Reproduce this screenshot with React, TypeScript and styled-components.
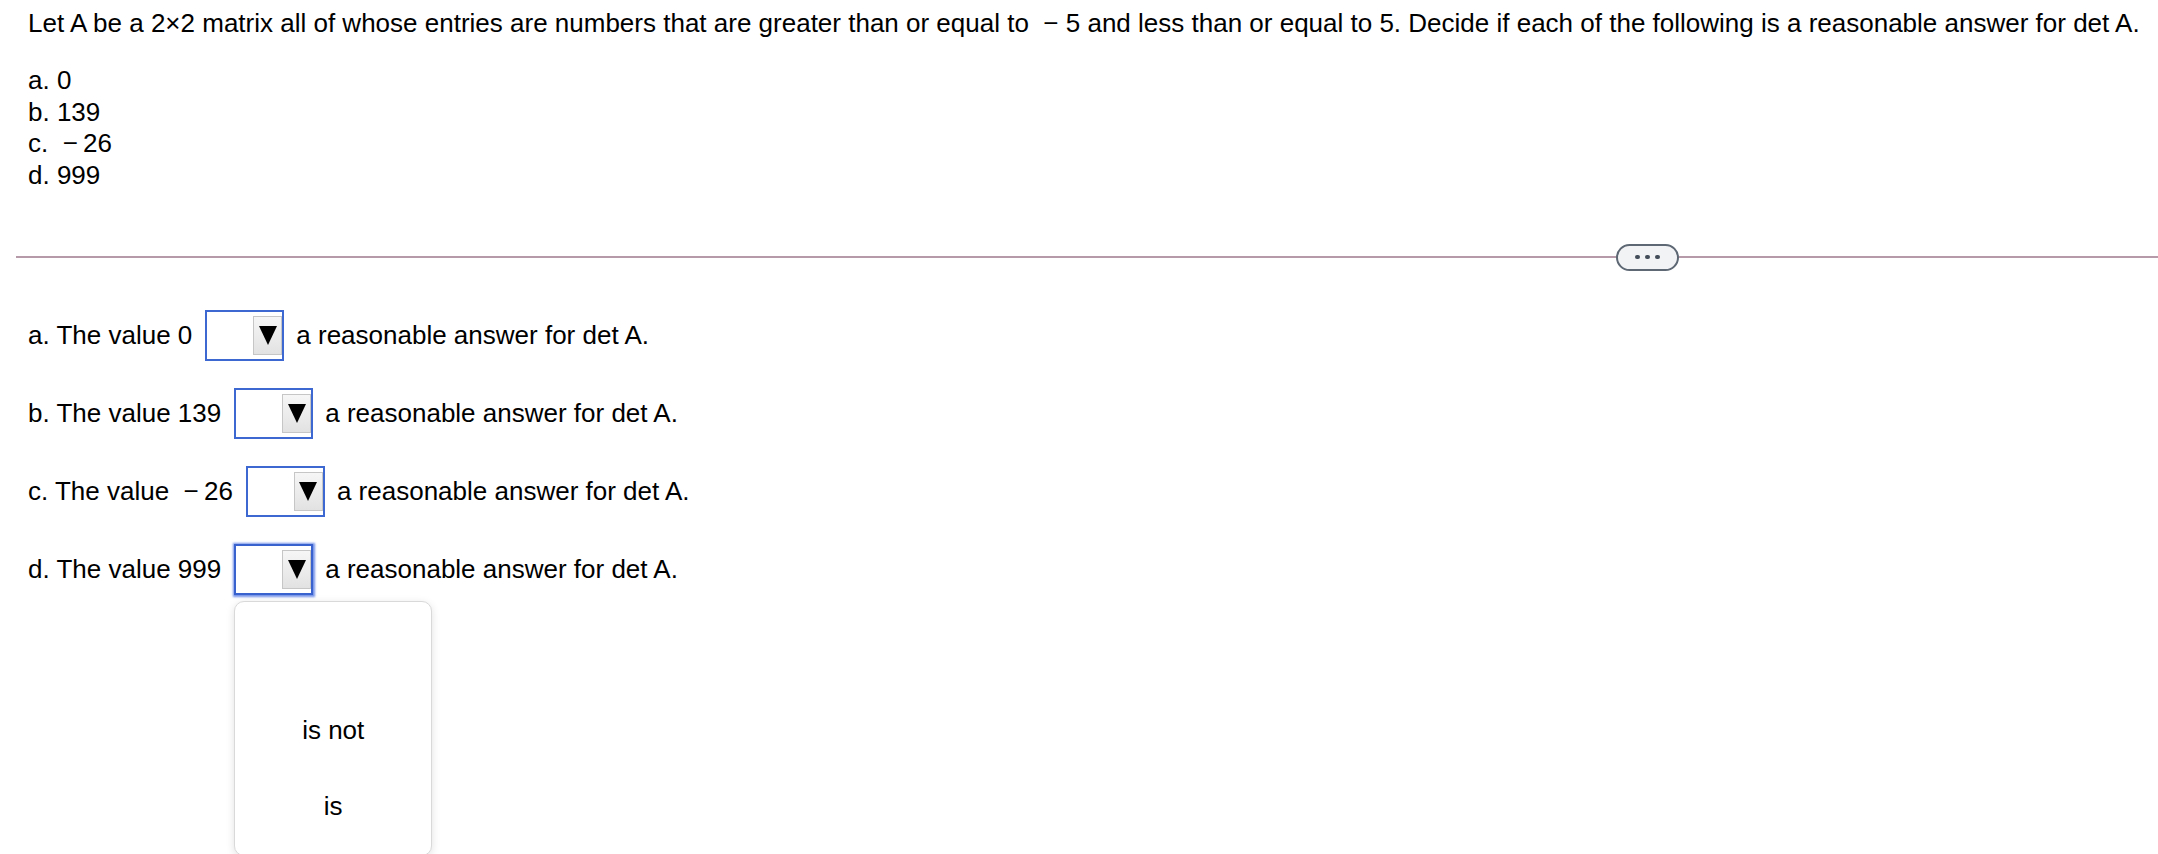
import React from "react";
import styled, { createGlobalStyle } from "styled-components";

const Global = createGlobalStyle`
  html, body { margin: 0; padding: 0; background: #ffffff; overflow: hidden; }
  body { font-family: "Liberation Sans", Arial, Helvetica, sans-serif; color: #000; }
`;

const Page = styled.div`
  display: flex;
  flex-direction: column;
  padding: 7px 0 0 16px;
  font-size: 26px;
  height: 847px;
`;

const Question = styled.div`
  padding-left: 12px;
`;

const Prompt = styled.p`
  margin: 0;
  line-height: 32px;
  white-space: nowrap;
`;

const Choices = styled.div`
  margin-top: 26px;
  display: flex;
  flex-direction: column;
`;

const Choice = styled.div`
  line-height: 31.67px;
  white-space: nowrap;
`;

const DividerRow = styled.div`
  margin-top: 52px;
  display: flex;
  align-items: center;
  height: 27px;
`;

const Rule = styled.div<{ $w?: number }>`
  height: 1.6px;
  background: #b79aaa;
  ${(p) => (p.$w ? `width: ${p.$w}px; flex: none;` : "flex: 1;")}
`;

const Pill = styled.button`
  flex: none;
  width: 63px;
  height: 27px;
  box-sizing: border-box;
  border: 2px solid #5d6874;
  border-radius: 14px;
  background: #f2f3f5;
  display: flex;
  align-items: center;
  justify-content: center;
  gap: 5.5px;
  padding: 0;
`;

const Dot = styled.span`
  width: 4.5px;
  height: 4.5px;
  border-radius: 50%;
  background: #434d59;
`;

const Answers = styled.div`
  margin-top: 39px;
  display: flex;
  flex-direction: column;
  gap: 27px;
  padding-left: 12px;
`;

const Row = styled.div`
  display: flex;
  align-items: center;
  height: 51px;
  white-space: nowrap;
`;

const Label = styled.span`
  line-height: 32px;
`;

const SelectWrap = styled.div`
  position: relative;
  margin: 0 12px 0 13px;
`;

const SelectBox = styled.div<{ $focused?: boolean }>`
  width: 79px;
  height: 51px;
  box-sizing: border-box;
  border: 2px solid ${(p) => (p.$focused ? "#3a62cf" : "#3d68d2")};
  ${(p) =>
    p.$focused
      ? "box-shadow: 0 0 2px 1.5px rgba(70, 110, 225, 0.75);"
      : ""}
  background: #fff;
  display: flex;
  align-items: center;
  justify-content: flex-end;
`;

const ArrowButton = styled.div`
  width: 29px;
  height: 39px;
  box-sizing: border-box;
  border: 1.5px solid #c6c6c6;
  background: linear-gradient(#f6f6f6, #e2e2e2);
  display: flex;
  align-items: center;
  justify-content: center;
`;

const Menu = styled.div`
  position: absolute;
  top: calc(100% + 6px);
  left: 0;
  width: 198px;
  box-sizing: border-box;
  border: 1.5px solid #d9d9d9;
  border-radius: 10px;
  background: #fff;
  box-shadow: 0 2px 8px rgba(0, 0, 0, 0.12);
  padding: 14px 0 11px;
  display: flex;
  flex-direction: column;
  z-index: 5;
`;

const Option = styled.div`
  height: 76px;
  line-height: 76px;
  text-align: center;
`;

const Arrow = () => (
  <svg width="18" height="19" viewBox="0 0 18 19">
    <polygon points="0,0 18,0 9,19" fill="#000" />
  </svg>
);

type Item = { label: string; focused?: boolean; open?: boolean };

const items: Item[] = [
  { label: "a. The value 0" },
  { label: "b. The value 139" },
  { label: "c. The value\u00a0 \u2212\u200926" },
  { label: "d. The value 999", focused: true, open: true },
];

export default function App() {
  return (
    <>
      <Global />
      <Page>
        <Question>
          <Prompt>
            Let A be a 2{"\u00d7"}2 matrix all of whose entries are numbers that are greater than or equal to {"\u00a0\u2212 "}5 and less than or equal to 5. Decide if each of the following is a reasonable answer for det A.
          </Prompt>
          <Choices>
            <Choice>a. 0</Choice>
            <Choice>b. 139</Choice>
            <Choice>c.{"\u00a0 \u2212\u2009"}26</Choice>
            <Choice>d. 999</Choice>
          </Choices>
        </Question>
        <DividerRow>
          <Rule $w={1600} />
          <Pill aria-label="more">
            <Dot />
            <Dot />
            <Dot />
          </Pill>
          <Rule />
        </DividerRow>
        <Answers>
          {items.map((it) => (
            <Row key={it.label}>
              <Label>{it.label}</Label>
              <SelectWrap>
                <SelectBox $focused={it.focused}>
                  <ArrowButton>
                    <Arrow />
                  </ArrowButton>
                </SelectBox>
                {it.open && (
                  <Menu>
                    <Option></Option>
                    <Option>is not</Option>
                    <Option>is</Option>
                  </Menu>
                )}
              </SelectWrap>
              <Label>a reasonable answer for det A.</Label>
            </Row>
          ))}
        </Answers>
      </Page>
    </>
  );
}
